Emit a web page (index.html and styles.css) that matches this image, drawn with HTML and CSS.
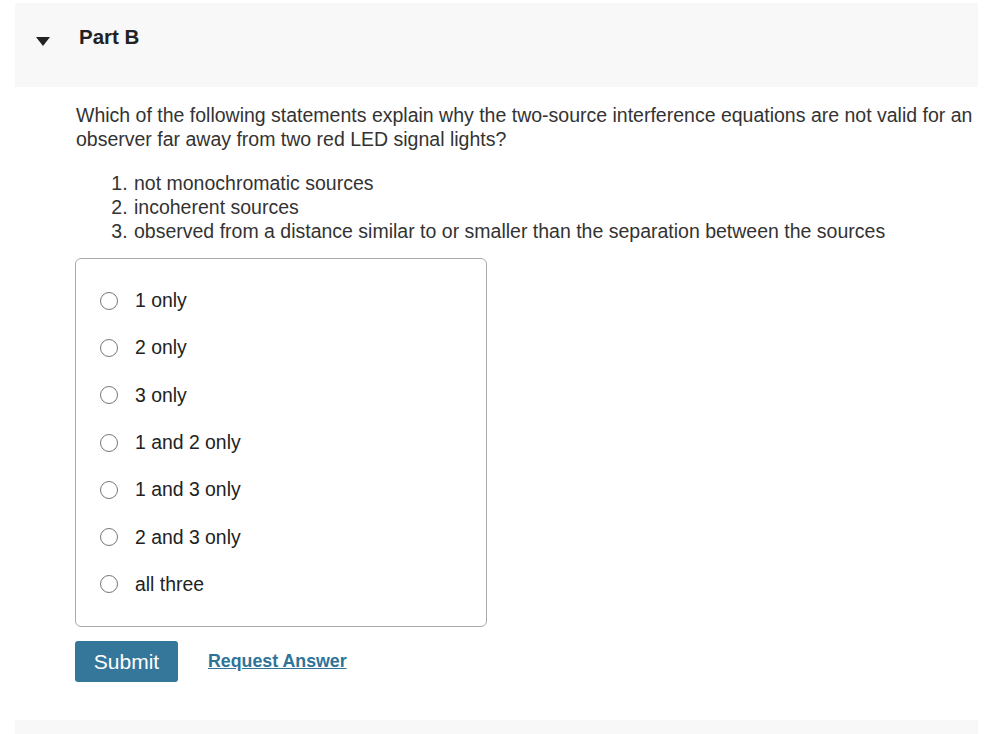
FILE: index.html
```html
<!DOCTYPE html>
<html>
<head>
<meta charset="utf-8">
<link rel="stylesheet" href="styles.css">
</head>
<body>
<div class="page">
  <div class="part-header">
    <span class="caret"></span>
    <h2 class="part-title">Part B</h2>
  </div>
  <div class="part-body">
    <p class="question">Which of the following statements explain why the two-source interference equations are not valid for an observer far away from two red LED signal lights?</p>
    <ol class="statements">
      <li>not monochromatic sources</li>
      <li>incoherent sources</li>
      <li>observed from a distance similar to or smaller than the separation between the sources</li>
    </ol>
    <div class="choices">
      <label class="choice"><span class="radio"></span><span>1 only</span></label>
      <label class="choice"><span class="radio"></span><span>2 only</span></label>
      <label class="choice"><span class="radio"></span><span>3 only</span></label>
      <label class="choice"><span class="radio"></span><span>1 and 2 only</span></label>
      <label class="choice"><span class="radio"></span><span>1 and 3 only</span></label>
      <label class="choice"><span class="radio"></span><span>2 and 3 only</span></label>
      <label class="choice"><span class="radio"></span><span>all three</span></label>
    </div>
    <div class="actions">
      <button class="submit">Submit</button>
      <a class="request" href="#">Request Answer</a>
    </div>
  </div>
  <div class="next-part"></div>
</div>
</body>
</html>
```

FILE: styles.css
```css
html, body {
  margin: 0;
  padding: 0;
  background: #fff;
}
body {
  font-family: "Liberation Sans", Arial, Helvetica, sans-serif;
  color: #333;
}
.page {
  padding: 3px 26px 0 15px;
}
.part-header {
  background: #f8f8f8;
  height: 84px;
  display: flex;
  align-items: flex-start;
}
.caret {
  width: 0;
  height: 0;
  border-left: 7.5px solid transparent;
  border-right: 7.5px solid transparent;
  border-top: 9px solid #222;
  margin: 34px 0 0 21px;
}
.part-title {
  margin: 21px 0 0 29px;
  font-size: 20.5px;
  font-weight: bold;
  color: #222;
  line-height: 26px;
}
.part-body {
  padding: 16px 0 0 61px;
}
.question {
  margin: 0;
  font-size: 19.5px;
  line-height: 24px;
}
.statements {
  margin: 20px 0 0 0;
  padding-left: 57px;
  font-size: 19.5px;
  line-height: 24px;
}
.statements li {
  padding-left: 1px;
}
.choices {
  margin: 15px 0 0 -1px;
  border: 1px solid #aaa;
  border-radius: 6px;
  padding-top: 18px;
  box-sizing: border-box;
  height: 369px;
  width: 412px;
}
.choice {
  display: flex;
  align-items: center;
  height: 47.3px;
  padding-left: 24px;
  font-size: 19.4px;
  color: #222;
}
.radio {
  width: 18px;
  height: 18px;
  border: 1.4px solid #777;
  border-radius: 50%;
  margin-right: 17px;
  box-sizing: border-box;
  flex: none;
}
.actions {
  display: flex;
  align-items: center;
  margin: 14px 0 0 -1px;
}
.submit {
  width: 103px;
  height: 41px;
  background: #35779a;
  color: #fff;
  border: none;
  border-radius: 3px;
  font-family: "Liberation Sans", Arial, sans-serif;
  font-size: 21px;
  padding: 0;
}
.request {
  margin-left: 30px;
  color: #2f7398;
  font-weight: bold;
  font-size: 17.8px;
  text-decoration: underline;
}
.next-part {
  margin-top: 38px;
  background: #f8f8f8;
  height: 20px;
}
```
